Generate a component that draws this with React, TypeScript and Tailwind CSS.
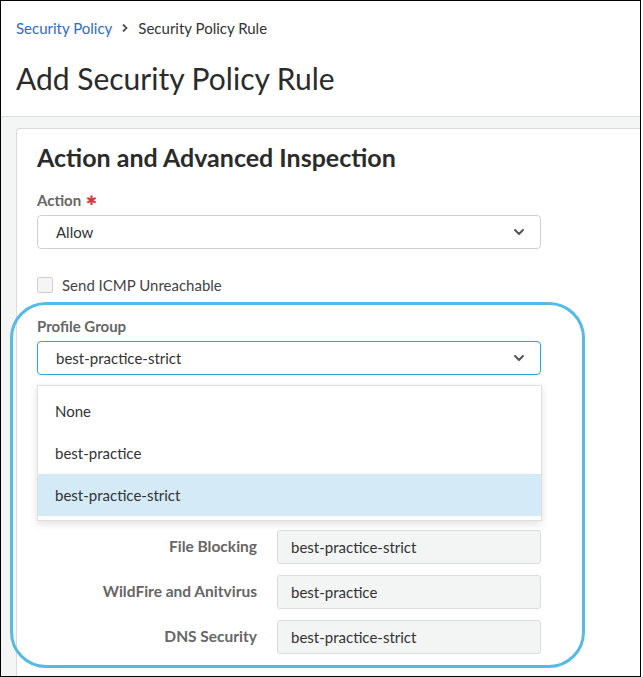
import { useState } from "react";

const font = { fontFamily: "Lato, 'Open Sans', sans-serif" };

function Chevron() {
  return (
    <svg width="12" height="8" viewBox="0 0 12 8" className="text-[#555]">
      <path d="M2 2 L6 6 L10 2" fill="none" stroke="currentColor" strokeWidth="2" strokeLinecap="round" strokeLinejoin="round" />
    </svg>
  );
}

function Select({ value, active }: { value: string; active?: boolean }) {
  return (
    <div
      className={`flex h-[34px] w-[504px] items-center justify-between rounded-[4px] border bg-white pl-[18px] pr-[15px] text-[15px] text-[#333] ${
        active ? "border-[#27a6d9]" : "border-[#cfcfcf]"
      }`}
    >
      <span>{value}</span>
      <Chevron />
    </div>
  );
}

const profiles = [
  { label: "File Blocking", value: "best-practice-strict" },
  { label: "WildFire and Anitvirus", value: "best-practice" },
  { label: "DNS Security", value: "best-practice-strict" },
];

export default function App() {
  const [selected] = useState("best-practice-strict");
  const options = ["None", "best-practice", "best-practice-strict"];

  return (
    <div className="relative flex h-[677px] w-[641px] flex-col overflow-hidden border border-black bg-white" style={font}>
      <div className="h-[116px] border-b border-[#dcdcdc] px-[15px]">
        <div className="flex h-[38px] items-center pt-[16px] text-[15px]">
          <span className="text-[#2f6bc4]">Security Policy</span>
          <svg width="8" height="10" viewBox="0 0 8 10" className="mx-[9px] text-[#555]">
            <path d="M2 1.5 L5.5 5 L2 8.5" fill="none" stroke="currentColor" strokeWidth="1.8" />
          </svg>
          <span className="text-[#333]">Security Policy Rule</span>
        </div>
        <h1 className="mt-[21px] text-[30px] leading-[36px] text-[#2b2b2b]">Add Security Policy Rule</h1>
      </div>

      <div className="flex flex-1 bg-[#f4f5f5] pl-[15px] pt-[11px]">
        <div className="flex-1 rounded-tl-[4px] border-l border-t border-[#dadada] bg-white pl-[20px] pt-[13px]">
          <h2 className="text-[25px] font-bold leading-[30px] text-[#2b2b2b]">Action and Advanced Inspection</h2>

          <div className="mt-[18px] flex h-[20px] items-center text-[15px] font-bold text-[#666]">
            Action
            <span className="ml-[5px] text-[13px] font-normal leading-none text-[#d9363e]" style={{ fontFamily: "'DejaVu Sans', sans-serif" }}>
              ✱
            </span>
          </div>
          <div className="mt-[5px]">
            <Select value="Allow" />
          </div>

          <label className="mt-[28px] flex h-[16px] items-center gap-[9px] text-[15px] text-[#444]">
            <span className="h-[16px] w-[16px] rounded-[2px] border border-[#cfcfcf] bg-[#f5f5f5]" />
            Send ICMP Unreachable
          </label>

          <div className="mt-[23px] text-[15px] font-bold leading-[20px] text-[#666]">Profile Group</div>
          <div className="mt-[5px]">
            <Select value={selected} active />
          </div>

          <ul className="mt-[10px] w-[505px] border border-[#e0e0e0] bg-white py-[4px] shadow-[0_3px_8px_rgba(0,0,0,0.12)]">
            {options.map((o) => (
              <li
                key={o}
                className={`flex h-[42px] items-center pl-[17px] text-[15px] text-[#333] ${
                  o === selected ? "bg-[#d4ebf7]" : ""
                }`}
              >
                {o}
              </li>
            ))}
          </ul>

          <div className="mt-[9px] flex flex-col gap-[11px]">
            {profiles.map((p) => (
              <div key={p.label} className="flex items-center">
                <div className="w-[240px] pr-[20px] text-right text-[15.5px] font-bold text-[#666]">{p.label}</div>
                <div className="flex h-[34px] w-[264px] items-center rounded-[3px] border border-[#dcdcdc] bg-[#f3f4f4] pl-[13px] text-[15px] text-[#333]">
                  {p.value}
                </div>
              </div>
            ))}
          </div>
        </div>
      </div>

      <div className="pointer-events-none absolute left-[9px] top-[301px] h-[366px] w-[575px] rounded-[36px] border-[3px] border-[#55bbe2]" />
    </div>
  );
}
